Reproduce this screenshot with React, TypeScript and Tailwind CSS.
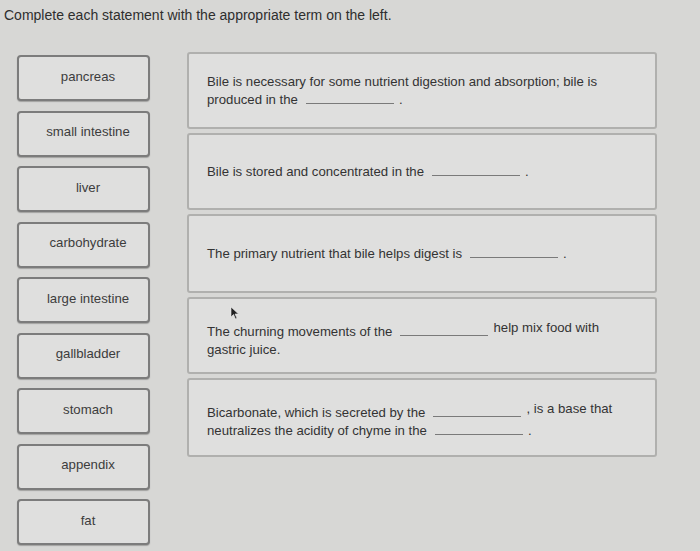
import React from "react";

const terms = [
  "pancreas",
  "small intestine",
  "liver",
  "carbohydrate",
  "large intestine",
  "gallbladder",
  "stomach",
  "appendix",
  "fat",
];

function Blank() {
  return <span className="inline-block w-[88px] h-[1px] border-b border-[#7a7a7a] ml-[8px] mr-[5px] align-baseline" />;
}

function Card({ children, h }: { children: React.ReactNode; h: string }) {
  return (
    <div
      className={`flex items-center rounded-[3px] border-2 border-[#b0b0ae] bg-[#dfdfde] pl-[18px] pr-4 ${h}`}
    >
      <div className="text-[13.2px] leading-[18px] text-[#333]">{children}</div>
    </div>
  );
}

export default function App() {
  return (
    <div
      className="relative w-[700px] h-[551px] overflow-hidden bg-[#d7d7d5] text-[#333]"
      style={{ fontFamily: '"Liberation Sans", Arial, sans-serif' }}
    >
      <div className="pl-[4px] pt-[6px] text-[14px] leading-[18px] text-[#2e2e2e]">
        Complete each statement with the appropriate term on the left.
      </div>
      <div className="flex">
        <div className="ml-[17px] mt-[31px] flex w-[133px] flex-col gap-[9.5px]">
          {terms.map((t) => (
            <div
              key={t}
              className="flex h-[46px] items-center justify-center rounded-[4px] border-2 border-[#7c7c7c] bg-[#dfdfde] pb-[3px] pl-[9px] text-[13.2px] text-[#3c3c3c] shadow-[0_1px_1px_rgba(0,0,0,0.25)]"
            >
              {t}
            </div>
          ))}
        </div>
        <div className="ml-[37px] mt-[28px] flex w-[470px] flex-col gap-[4px]">
          <Card h="h-[77px]">
            Bile is necessary for some nutrient digestion and absorption; bile is
            <br />
            produced in the
            <Blank />.
          </Card>
          <Card h="h-[77px]">
            Bile is stored and concentrated in the
            <Blank />.
          </Card>
          <Card h="h-[79px]">
            The primary nutrient that bile helps digest is
            <Blank />.
          </Card>
          <Card h="h-[77px]">
            <span className="block pt-[6px]">
              The churning movements of the
              <Blank />
              <span className="align-[4px]">help mix food with</span>
              <br />
              gastric juice.
            </span>
          </Card>
          <Card h="h-[79px]">
            <span className="block pt-[4px]">
              Bicarbonate, which is secreted by the
              <Blank />
              <span className="align-[4px]">, is a base that</span>
              <br />
              neutralizes the acidity of chyme in the
              <Blank />.
            </span>
          </Card>
        </div>
      </div>
      <svg
        className="absolute left-[230px] top-[306px]"
        width="10"
        height="14"
        viewBox="0 0 10 14"
      >
        <path d="M1 1 L1 11 L3.5 8.5 L5.5 13 L7 12.3 L5 8 L8.5 8 Z" fill="#222" stroke="#eee" strokeWidth="0.6" />
      </svg>
    </div>
  );
}
